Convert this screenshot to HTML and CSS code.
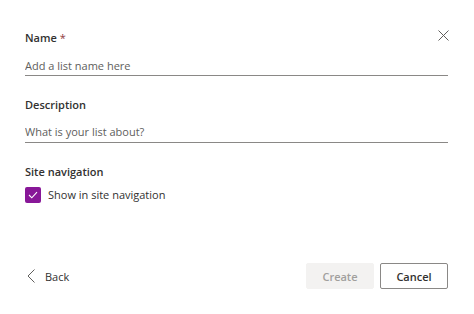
FILE: index.html
```html
<!DOCTYPE html>
<html lang="en">
<head>
    <meta charset="UTF-8">
    <meta name="viewport" content="width=device-width, initial-scale=1.0">
    <title>Create list</title>
    <link rel="stylesheet" href="styles.css">
</head>
<body>
    <div class="panel">
        <div class="header">
            <label class="label" for="list-name">Name <span class="required">*</span></label>
            <button class="close" aria-label="Close">
                <svg width="11" height="11" viewBox="0 0 11 11">
                    <path d="M0.5 0.5 L10.5 10.5 M10.5 0.5 L0.5 10.5" stroke="#605e5c" stroke-width="1" fill="none"/>
                </svg>
            </button>
        </div>
        <input class="field name-field" id="list-name" type="text" placeholder="Add a list name here">

        <label class="label section" for="list-desc">Description</label>
        <input class="field desc-field" id="list-desc" type="text" placeholder="What is your list about?">

        <div class="label section">Site navigation</div>
        <label class="check-row">
            <span class="checkbox">
                <svg width="10" height="8" viewBox="0 0 10 8">
                    <path d="M1 4 L3.8 6.8 L9 1.2" stroke="#fff" stroke-width="1.1" fill="none"/>
                </svg>
            </span>
            <span>Show in site navigation</span>
        </label>

        <div class="footer">
            <button class="back">
                <svg width="8" height="14" viewBox="0 0 8 14">
                    <path d="M7.5 0.5 L1 7 L7.5 13.5" stroke="#605e5c" stroke-width="1" fill="none"/>
                </svg>
                <span>Back</span>
            </button>
            <div class="actions">
                <button class="btn btn-disabled" disabled>Create</button>
                <button class="btn btn-default">Cancel</button>
            </div>
        </div>
    </div>
</body>
</html>
```

FILE: styles.css
```css
body {
    margin: 0;
    padding: 0;
    background-color: #fff;
    font-family: "Open Sans", "Noto Sans", sans-serif;
    font-size: 11px;
    color: #323130;
}

.panel {
    padding: 29px 26px 0 25px;
}

.header {
    display: flex;
    justify-content: space-between;
    align-items: flex-start;
}

.label {
    display: block;
    font-weight: 600;
    line-height: 18px;
    color: #323130;
}

.required {
    color: #8e3a3e;
    font-weight: 400;
}

.close {
    background: none;
    border: none;
    padding: 0;
    margin: 1px -1px 0 0;
    width: 11px;
    height: 11px;
    cursor: pointer;
}

.close svg {
    display: block;
}

.field {
    display: block;
    box-sizing: content-box;
    width: 100%;
    margin: 0;
    padding: 0;
    border: none;
    border-bottom: 1px solid #8a8886;
    font-family: inherit;
    font-size: 11px;
    line-height: 18px;
    color: #323130;
    outline: none;
}

.field::placeholder {
    color: #605e5c;
}

.name-field {
    margin-top: 10px;
    height: 18px;
}

.desc-field {
    margin-top: 6px;
    height: 22px;
}

.section {
    margin-top: 20px;
}

.check-row {
    display: flex;
    align-items: center;
    gap: 7px;
    margin-top: 5px;
    height: 18px;
    line-height: 18px;
}

.checkbox {
    display: flex;
    align-items: center;
    justify-content: center;
    width: 16px;
    height: 16px;
    border-radius: 2px;
    background-color: #881798;
}

.footer {
    display: flex;
    justify-content: space-between;
    align-items: center;
    margin-top: 59px;
}

.back {
    display: flex;
    align-items: center;
    gap: 10px;
    background: none;
    border: none;
    padding: 0 0 0 2px;
    font-family: inherit;
    font-size: 11px;
    color: #323130;
    cursor: pointer;
}

.back svg {
    display: block;
}

.actions {
    display: flex;
    gap: 6px;
}

.btn {
    box-sizing: border-box;
    width: 68px;
    height: 26px;
    border-radius: 2px;
    font-family: inherit;
    font-size: 11px;
    font-weight: 600;
    padding: 0;
}

.btn-disabled {
    background-color: #f3f2f1;
    border: 1px solid #f3f2f1;
    color: #a19f9d;
}

.btn-default {
    background-color: #fff;
    border: 1px solid #8a8886;
    color: #323130;
    cursor: pointer;
}
```
